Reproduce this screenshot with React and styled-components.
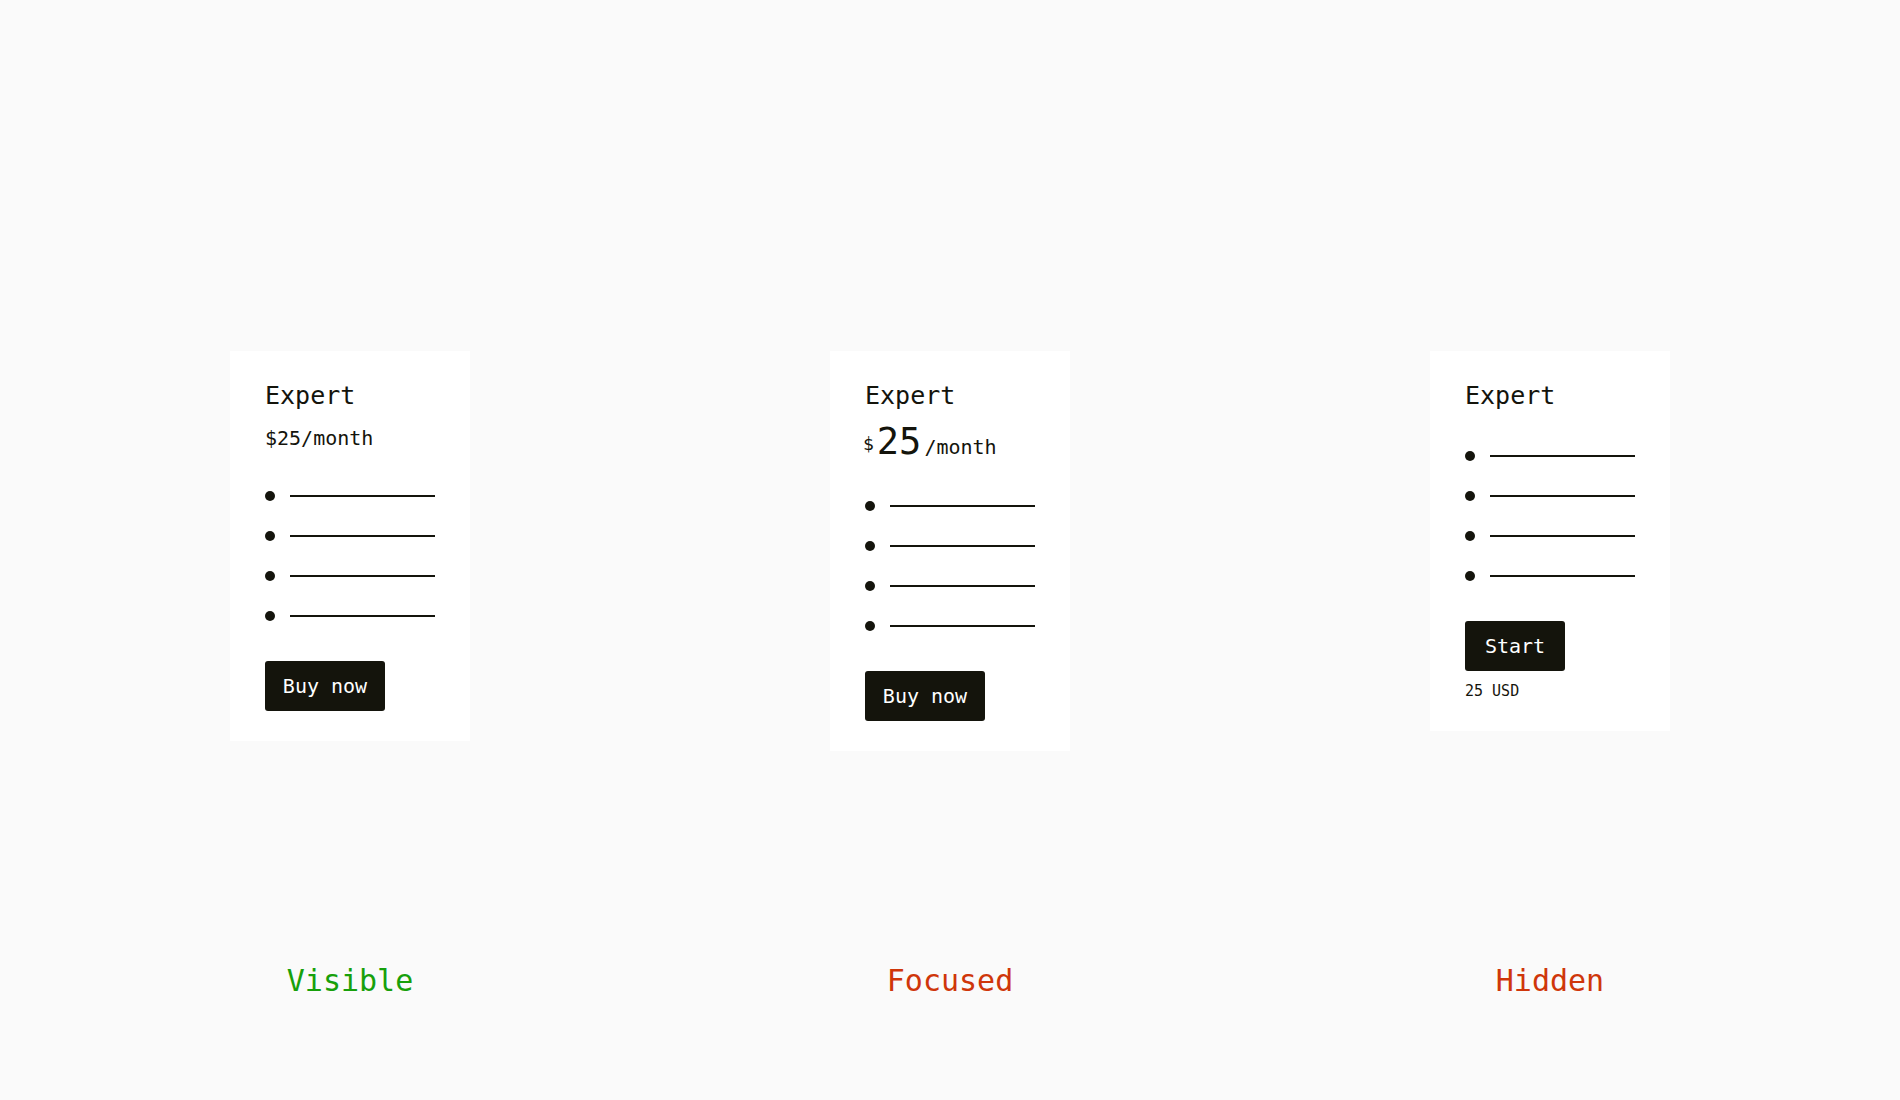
import React from "react";
import styled, { createGlobalStyle } from "styled-components";

const ink = "#14140c";

const Global = createGlobalStyle`
  html, body {
    margin: 0;
    padding: 0;
    background: #fafafa;
  }
  body {
    font-family: "DejaVu Sans Mono", "Liberation Mono", monospace;
    color: ${ink};
  }
`;

const Page = styled.main`
  display: grid;
  grid-template-columns: repeat(3, 600px);
  justify-content: center;
  padding-top: 351px;
  min-height: 100vh;
  box-sizing: border-box;
`;

const Column = styled.section`
  display: flex;
  flex-direction: column;
  align-items: center;
`;

const Stage = styled.div`
  height: 610px;
  display: flex;
  align-items: flex-start;
  justify-content: center;
`;

const Card = styled.article`
  width: 240px;
  box-sizing: border-box;
  background: #ffffff;
  padding: 30px 35px 30px;
  display: flex;
  flex-direction: column;
  align-items: flex-start;
`;

const Title = styled.h3`
  margin: 0;
  font-size: 25px;
  line-height: 30px;
  font-weight: 400;
`;

const PlainPrice = styled.p`
  margin: 12px 0 0;
  font-size: 20px;
  line-height: 30px;
`;

const BigPrice = styled.p`
  margin: 11.5px 0 0 -2px;
  height: 40px;
  display: flex;
  align-items: baseline;
`;

const Currency = styled.span`
  font-size: 18px;
  line-height: 1;
  margin-right: 3px;
  transform: translateY(-4px);
`;

const Amount = styled.span`
  font-size: 37px;
  line-height: 1;
  margin-right: 3px;
`;

const Period = styled.span`
  font-size: 20px;
  line-height: 1;
`;

const Features = styled.ul`
  list-style: none;
  margin: ${(p) => p.$gap}px 0 0;
  padding: 0;
  width: 170px;
`;

const Feature = styled.li`
  height: 40px;
  display: flex;
  align-items: center;
  gap: 15px;
`;

const Dot = styled.span`
  width: 10px;
  height: 10px;
  border-radius: 50%;
  background: ${ink};
  flex: none;
`;

const Rule = styled.span`
  flex: 1;
  height: 2px;
  background: ${ink};
`;

const Button = styled.button`
  margin-top: 25px;
  width: ${(p) => p.$width}px;
  height: 50px;
  border: none;
  border-radius: 3px;
  background: ${ink};
  color: #ffffff;
  font-family: "DejaVu Sans Mono", "Liberation Mono", monospace;
  font-size: 20px;
  padding: 0;
  cursor: pointer;
`;

const Note = styled.p`
  margin: 10px 0 0;
  font-size: 15px;
  line-height: 20px;
`;

const Label = styled.h2`
  margin: 0;
  font-size: 30px;
  line-height: 40px;
  font-weight: 400;
  color: ${(p) => p.$color};
`;

const FeatureList = ({ gap }) => (
  <Features $gap={gap}>
    {[0, 1, 2, 3].map((i) => (
      <Feature key={i}>
        <Dot />
        <Rule />
      </Feature>
    ))}
  </Features>
);

export default function App() {
  return (
    <>
      <Global />
      <Page>
        <Column>
          <Stage>
            <Card>
              <Title>Expert</Title>
              <PlainPrice>$25/month</PlainPrice>
              <FeatureList gap={23} />
              <Button $width={120}>Buy now</Button>
            </Card>
          </Stage>
          <Label $color="#17a00b">Visible</Label>
        </Column>

        <Column>
          <Stage>
            <Card>
              <Title>Expert</Title>
              <BigPrice>
                <Currency>$</Currency>
                <Amount>25</Amount>
                <Period>/month</Period>
              </BigPrice>
              <FeatureList gap={23} />
              <Button $width={120}>Buy now</Button>
            </Card>
          </Stage>
          <Label $color="#cf360a">Focused</Label>
        </Column>

        <Column>
          <Stage>
            <Card>
              <Title>Expert</Title>
              <FeatureList gap={25} />
              <Button $width={100}>Start</Button>
              <Note>25 USD</Note>
            </Card>
          </Stage>
          <Label $color="#cf360a">Hidden</Label>
        </Column>
      </Page>
    </>
  );
}
